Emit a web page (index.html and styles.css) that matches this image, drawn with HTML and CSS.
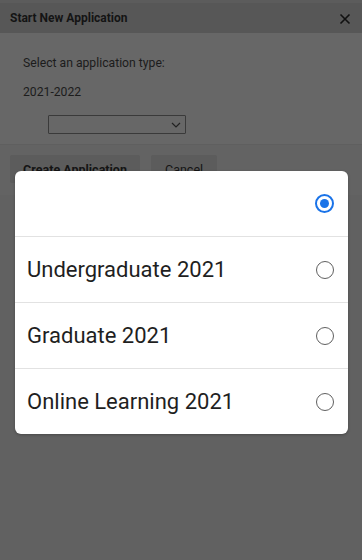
FILE: index.html
```html
<!DOCTYPE html>
<html>
<head>
<meta charset="utf-8">
<link rel="stylesheet" href="styles.css">
</head>
<body>
<div class="page">
  <div class="topstrip"></div>
  <div class="header">
    <span class="title">Start New Application</span>
    <span class="close">
      <svg width="12" height="12" viewBox="0 0 12 12"><path d="M1.5 1.5L10.5 10.5M10.5 1.5L1.5 10.5" stroke="#111" stroke-width="1.6" fill="none"/></svg>
    </span>
  </div>
  <div class="content">
    <p class="label">Select an application type:</p>
    <p class="year">2021-2022</p>
    <div class="select">
      <svg width="10" height="6" viewBox="0 0 10 6"><path d="M1 1L5 5L9 1" stroke="#222" stroke-width="1.2" fill="none"/></svg>
    </div>
  </div>
  <div class="footer">
    <span class="btn primary">Create Application</span>
    <span class="btn">Cancel</span>
  </div>
</div>
<div class="picker">
  <div class="row"><span class="opt"></span><span class="radio on"></span></div>
  <div class="row"><span class="opt">Undergraduate 2021</span><span class="radio"></span></div>
  <div class="row"><span class="opt">Graduate 2021</span><span class="radio"></span></div>
  <div class="row"><span class="opt">Online Learning 2021</span><span class="radio"></span></div>
</div>
</body>
</html>
```
FILE: styles.css
```css
html, body {
  margin: 0;
  padding: 0;
  width: 362px;
  height: 560px;
  background: #616161;
  font-family: Roboto, "Liberation Sans", sans-serif;
  overflow: hidden;
}
.page {
  display: flex;
  flex-direction: column;
}
.topstrip {
  height: 3px;
  background: #5c5c5c;
}
.header {
  height: 30px;
  background: #575757;
  display: flex;
  align-items: center;
  justify-content: space-between;
  padding: 0 11px 0 10px;
}
.title {
  font-size: 12px;
  font-weight: bold;
  color: #141414;
}
.close {
  display: flex;
  margin-top: 2px;
}
.content {
  background: #676767;
  padding: 23px 0 10px 23px;
  height: 78px;
}
.label, .year {
  margin: 0;
  font-size: 12.2px;
  color: #1c1c1c;
}
.year {
  margin-top: 15px;
}
.select {
  margin: 16px 0 0 25px;
  width: 134px;
  height: 17px;
  border: 1px solid #3a3a3a;
  border-radius: 1px;
  display: flex;
  align-items: center;
  justify-content: flex-end;
  padding-right: 2px;
  box-sizing: content-box;
}
.select svg {
  margin-right: 2px;
}
.footer {
  background: #636363;
  border-top: 1px solid #5f5f5f;
  padding: 10px 10px 0 10px;
  display: flex;
  gap: 11px;
  height: 40px;
}
.btn {
  height: 28px;
  background: #5c5c5c;
  color: #141414;
  font-size: 12.5px;
  display: flex;
  align-items: center;
  justify-content: center;
  padding: 0 14px;
  border-radius: 2px;
  white-space: nowrap;
}
.btn.primary {
  width: 102px;
  font-weight: bold;
}
.picker {
  position: absolute;
  left: 15px;
  top: 171px;
  width: 333px;
  background: #fff;
  border-radius: 6px;
  overflow: hidden;
  box-shadow: 0 1px 3px rgba(0,0,0,0.25);
}
.row {
  height: 65px;
  display: flex;
  align-items: center;
  justify-content: space-between;
  padding: 0 14px 0 12px;
  border-top: 1px solid #e2e2e2;
}
.row:first-child {
  border-top: none;
}
.opt {
  font-size: 22px;
  color: #1f1f1f;
}
.radio {
  width: 16px;
  height: 16px;
  border: 1.6px solid #5f5f5f;
  border-radius: 50%;
  box-sizing: content-box;
  display: flex;
  align-items: center;
  justify-content: center;
}
.radio.on {
  border: 2px solid #1a73e8;
  width: 15px;
  height: 15px;
}
.radio.on::after {
  content: "";
  width: 9px;
  height: 9px;
  border-radius: 50%;
  background: #1a73e8;
}
```
